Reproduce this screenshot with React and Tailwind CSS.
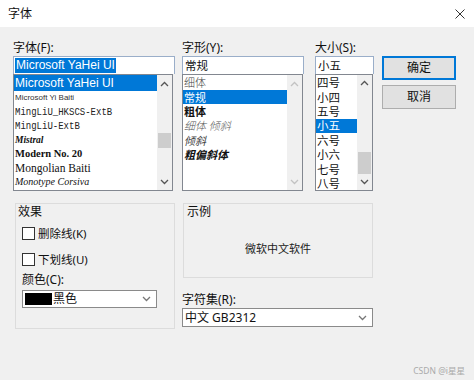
import React from "react";

const cjk = "font-['Noto_Sans','Noto_Sans_CJK_SC',sans-serif]";
const ui = "font-['Liberation_Sans','Noto_Sans_CJK_SC',sans-serif]";

const Chevron = ({ up, color = "#555" }) => (
  <svg width="9" height="6" viewBox="0 0 9 6">
    <path
      d={up ? "M1 5 L4.5 1.5 L8 5" : "M1 1 L4.5 4.5 L8 1"}
      fill="none"
      stroke={color}
      strokeWidth="1.3"
    />
  </svg>
);

const fontItems = [
  { name: "Microsoft Yi Baiti", cls: "font-['Liberation_Sans',sans-serif] text-[8px] text-[#333]" },
  { name: "MingLiU_HKSCS-ExtB", cls: "font-['Liberation_Mono',monospace] text-[9px] text-[#222] scale-y-125 origin-left" },
  { name: "MingLiU-ExtB", cls: "font-['Liberation_Mono',monospace] text-[9px] text-[#222] scale-y-125 origin-left" },
  { name: "Mistral", cls: "font-['Liberation_Serif',serif] italic font-bold text-[9.5px] text-[#111]" },
  { name: "Modern No. 20", cls: "font-['Liberation_Serif',serif] font-bold text-[10.5px] text-[#111]" },
  { name: "Mongolian Baiti", cls: "font-['Liberation_Serif',serif] text-[11.5px] text-[#111]" },
  { name: "Monotype Corsiva", cls: "font-['Liberation_Serif',serif] italic text-[10px] text-[#111]" },
];

const styleItems = [
  { name: "细体", cls: "font-light text-[#444]" },
  { name: "常规", cls: "bg-[#0078d7] text-white" },
  { name: "粗体", cls: "font-bold text-[#111]" },
  { name: "细体 倾斜", cls: "italic font-light text-[#555]" },
  { name: "倾斜", cls: "italic text-[#444]" },
  { name: "粗偏斜体", cls: "italic font-bold text-[#111]" },
];

const sizeItems = ["四号", "小四", "五号", "小五", "六号", "小六", "七号", "八号"];

const Checkbox = ({ label }) => (
  <div className="flex h-[13px] items-center pl-[6px]">
    <div className="h-[13px] w-[13px] border border-[#333] bg-white" />
    <span className="ml-[3px] text-[11.5px] leading-[13px] text-[#111]">{label}</span>
  </div>
);

export default function App() {
  return (
    <div className={`h-[380px] w-[474px] overflow-hidden ${cjk} text-[#111]`}>
      <div className="flex h-[27px] items-center justify-between bg-white pl-[8px] pr-[9px]">
        <span className="text-[12px] leading-[16px]">字体</span>
        <svg width="10" height="10" viewBox="0 0 10 10">
          <path d="M0.5 0.5 L9.5 9.5 M9.5 0.5 L0.5 9.5" stroke="#333" strokeWidth="1" />
        </svg>
      </div>

      <div className="relative h-[353px] bg-[#f0f0f0] pl-[13px] pt-[13px]">
        <div className="flex items-start">
          {/* font family */}
          <div className="w-[162px]">
            <div className="h-[16px] text-[12px] leading-[16px]">字体(F):</div>
            <div className="flex h-[18px] items-center border border-b-0 border-[#9aaec9] bg-white pl-[1px]">
              <span className={`bg-[#0078d7] px-[1px] text-[12px] leading-[15px] text-white ${ui}`}>Microsoft YaHei UI</span>
            </div>
            <div className="flex h-[117px] w-[160px] border border-[#828790] bg-white">
              <div className="flex-1 overflow-hidden">
                <div className={`flex h-[16px] items-center bg-[#0078d7] pl-[1px] text-[12px] leading-[16px] text-white ${ui}`}>
                  Microsoft YaHei UI
                </div>
                {fontItems.map((f) => (
                  <div key={f.name} className="flex h-[14px] items-center whitespace-nowrap pl-[1px]">
                    <span className={`inline-block leading-[12px] ${f.cls}`}>{f.name}</span>
                  </div>
                ))}
              </div>
              <div className="flex w-[15px] flex-col bg-[#f0f0f0]">
                <div className="flex h-[17px] items-center justify-center">
                  <Chevron up />
                </div>
                <div className="ml-[1px] mt-[41px] h-[15px] w-[13px] bg-[#cdcdcd]" />
                <div className="flex-1" />
                <div className="flex h-[17px] items-center justify-center">
                  <Chevron />
                </div>
              </div>
            </div>
          </div>

          {/* font style */}
          <div className="ml-[7px] w-[122px]">
            <div className="h-[16px] text-[12px] leading-[16px]">字形(Y):</div>
            <div className="flex h-[18px] items-center border border-b-0 border-[#9aaec9] bg-white pl-[2px] text-[11.5px] leading-[14px]">
              常规
            </div>
            <div className="flex h-[117px] w-[121px] border border-[#828790] bg-white">
              <div className="flex-1 overflow-hidden pt-[0.5px]">
                {styleItems.map((s) => (
                  <div key={s.name} className={`flex h-[14.4px] items-center overflow-hidden pl-[1px] text-[11px] leading-[13px] ${s.cls}`}>
                    {s.name}
                  </div>
                ))}
              </div>
              <div className="flex w-[15px] flex-col bg-[#f0f0f0]">
                <div className="flex h-[17px] items-center justify-center">
                  <Chevron up color="#c2c2c2" />
                </div>
                <div className="flex-1" />
                <div className="flex h-[17px] items-center justify-center">
                  <Chevron color="#c2c2c2" />
                </div>
              </div>
            </div>
          </div>

          {/* font size */}
          <div className="ml-[11px] w-[59px]">
            <div className="h-[16px] text-[12px] leading-[16px]">大小(S):</div>
            <div className="flex h-[18px] items-center border border-b-0 border-[#9aaec9] bg-white pl-[2px] text-[11.5px] leading-[14px]">
              小五
            </div>
            <div className="flex h-[117px] w-[58px] border border-[#828790] bg-white">
              <div className="flex-1 overflow-hidden pt-[0.5px]">
                {sizeItems.map((s) => (
                  <div
                    key={s}
                    className={`flex h-[14.4px] items-center overflow-hidden pl-[1px] text-[11.5px] leading-[13px] ${
                      s === "小五" ? "bg-[#0078d7] text-white" : "text-[#111]"
                    }`}
                  >
                    {s}
                  </div>
                ))}
              </div>
              <div className="flex w-[15px] flex-col bg-[#f0f0f0]">
                <div className="flex h-[17px] items-center justify-center">
                  <Chevron up />
                </div>
                <div className="ml-[1px] mt-[61px] h-[22px] w-[13px] bg-[#cdcdcd]" />
                <div className="flex-1" />
                <div className="flex h-[17px] items-center justify-center">
                  <Chevron />
                </div>
              </div>
            </div>
          </div>

          {/* buttons */}
          <div className="ml-[8px] flex w-[74px] flex-col gap-[5px] pt-[16px]">
            <button className="h-[24px] w-full border-2 border-[#0078d7] bg-[#e1e1e1] text-[12px] leading-[16px] text-[#111]">
              确定
            </button>
            <button className="h-[24px] w-full border border-[#adadad] bg-[#e1e1e1] text-[12px] leading-[16px] text-[#111]">
              取消
            </button>
          </div>
        </div>

        <div className="mt-[12px] flex items-start">
          {/* effects */}
          <div className="ml-[2px] h-[126px] w-[160px] border border-[#dcdcdc]">
            <div className="pl-[2px] text-[12px] leading-[16px]">效果</div>
            <div className="mt-[7px]">
              <Checkbox label="删除线(K)" />
            </div>
            <div className="mt-[13px]">
              <Checkbox label="下划线(U)" />
            </div>
            <div className="mt-[6px] pl-[6px] text-[12px] leading-[16px]">颜色(C):</div>
            <div className="ml-[6px] mt-[2px] flex h-[18px] w-[135px] items-center border border-[#8a8a8a] bg-white">
              <div className="ml-[2px] h-[12px] w-[27px] bg-black" />
              <span className="ml-[1px] text-[12px] leading-[16px]">黑色</span>
              <div className="ml-auto mr-[5px] flex items-center">
                <Chevron color="#777" />
              </div>
            </div>
          </div>

          {/* sample + charset */}
          <div className="ml-[7px] w-[191px]">
            <div className="ml-[1px] flex h-[75px] w-[190px] flex-col border border-[#dcdcdc]">
              <div className="pl-[3px] text-[12px] leading-[16px]">示例</div>
              <div className="flex flex-1 items-center justify-center text-[11px] leading-[16px] text-[#222]">
                微软中文软件
              </div>
            </div>
            <div className="mt-[14px] text-[12px] leading-[16px]">字符集(R):</div>
            <div className="flex h-[19px] w-[191px] items-center border border-[#8a8a8a] bg-white pl-[2px]">
              <span className="text-[12px] leading-[16px]">中文 GB2312</span>
              <div className="ml-auto mr-[5px] flex items-center">
                <Chevron color="#777" />
              </div>
            </div>
          </div>
        </div>

        <div className="absolute bottom-[4px] right-[9px] text-[8.5px] leading-[10px] text-[#aaa]">
          CSDN @i星星
        </div>
      </div>
    </div>
  );
}
